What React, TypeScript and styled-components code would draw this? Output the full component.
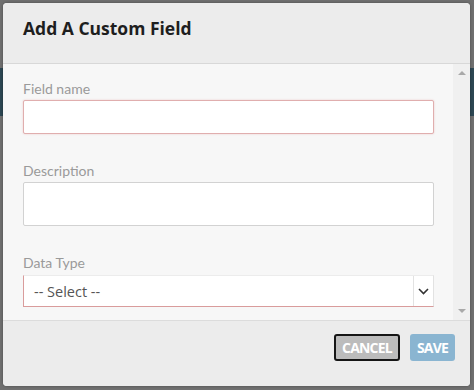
import React from "react";
import styled, { createGlobalStyle } from "styled-components";

const Global = createGlobalStyle`
  html, body { margin: 0; padding: 0; }
  body {
    width: 474px;
    height: 390px;
    overflow: hidden;
    background: linear-gradient(to bottom, #707070 0 68px, #2d4753 68px 116px, #707070 116px);
    font-family: "Open Sans", "Liberation Sans", sans-serif;
  }
`;

const Modal = styled.div`
  margin: 3px;
  width: 467px;
  height: 383px;
  box-sizing: border-box;
  border-radius: 4px;
  background: #ececec;
  display: flex;
  flex-direction: column;
  overflow: hidden;
  box-shadow: 0 0 3px rgba(0, 0, 0, 0.35);
`;

const Header = styled.div`
  height: 61px;
  box-sizing: border-box;
  padding: 13px 20px 0;
  border-bottom: 1px solid #d8d8d8;
  background: #ececec;
`;

const Title = styled.h1`
  margin: 0;
  font-family: "Open Sans", sans-serif;
  font-size: 17.5px;
  font-weight: 700;
  color: #1e1e1e;
`;

const Body = styled.div`
  height: 256px;
  display: flex;
  background: #f7f7f7;
  border-bottom: 1px solid #dcdcdc;
`;

const Content = styled.div`
  flex: 1;
  padding: 16px 19px 0 20px;
  overflow: hidden;
  display: flex;
  flex-direction: column;
`;

const Field = styled.div`
  display: flex;
  flex-direction: column;
  margin-bottom: 28px;
`;

const Label = styled.label`
  font-family: Lato, "Open Sans", sans-serif;
  font-size: 14px;
  line-height: 17px;
  color: #9a9a9a;
  margin-bottom: 3px;
`;

const TextInput = styled.div<{ $h: number; $error?: boolean }>`
  height: ${(p) => p.$h}px;
  box-sizing: border-box;
  background: #fff;
  border: 1px solid ${(p) => (p.$error ? "#e0aeae" : "#d2d2d2")};
  border-radius: 2px;
  box-shadow: ${(p) => (p.$error ? "0 0 2px rgba(220,140,140,0.45)" : "none")};
`;

const Select = styled.div`
  height: 32px;
  margin-top: 1px;
  box-sizing: border-box;
  background: #fff;
  border-style: solid;
  border-width: 1px;
  border-color: #ececec #e2e2e2 #d99c9c #d99c9c;
  display: flex;
  align-items: center;
`;

const SelectText = styled.span`
  flex: 1;
  padding-left: 10px;
  font-family: "Open Sans", sans-serif;
  font-size: 14.5px;
  color: #555;
`;

const Caret = styled.span`
  width: 19px;
  align-self: stretch;
  border-left: 1px solid #e2e2e2;
  display: flex;
  align-items: center;
  justify-content: center;
`;

const ScrollTrack = styled.div`
  width: 17px;
  background: #f0f0f0;
  display: flex;
  flex-direction: column;
  justify-content: space-between;
  align-items: center;
  padding: 7px 0 7px;
  box-sizing: border-box;
`;

const Arrow = styled.span<{ $down?: boolean }>`
  width: 0;
  height: 0;
  border-left: 4px solid transparent;
  border-right: 4px solid transparent;
  ${(p) =>
    p.$down ? "border-top: 4px solid #a9a9a9;" : "border-bottom: 4px solid #a9a9a9;"}
`;

const Footer = styled.div`
  flex: 1;
  display: flex;
  justify-content: flex-end;
  align-items: flex-start;
  gap: 10px;
  padding: 13px 15px 0;
  background: #ececec;
`;

const Button = styled.button<{ $primary?: boolean }>`
  height: 27px;
  box-sizing: border-box;
  padding: 0 ${(p) => (p.$primary ? "7px" : "6px")};
  font-family: "Open Sans", sans-serif;
  font-size: 14px;
  font-weight: 700;
  letter-spacing: -0.8px;
  color: #fff;
  text-transform: uppercase;
  border-radius: 3px;
  border: ${(p) => (p.$primary ? "none" : "2px solid #151515")};
  background: ${(p) => (p.$primary ? "#8ab5d1" : "#bcbcbc")};
  cursor: pointer;
`;

export default function App() {
  return (
    <>
      <Global />
      <Modal>
        <Header>
          <Title>Add A Custom Field</Title>
        </Header>
        <Body>
          <Content>
            <Field>
              <Label>Field name</Label>
              <TextInput $h={34} $error />
            </Field>
            <Field>
              <Label>Description</Label>
              <TextInput $h={44} />
            </Field>
            <Field>
              <Label>Data Type</Label>
              <Select>
                <SelectText>-- Select --</SelectText>
                <Caret>
                  <svg width="11" height="7" viewBox="0 0 11 7">
                    <path d="M1 1l4.5 4.5L10 1" fill="none" stroke="#333" strokeWidth="1.6" />
                  </svg>
                </Caret>
              </Select>
            </Field>
          </Content>
          <ScrollTrack>
            <Arrow />
            <Arrow $down />
          </ScrollTrack>
        </Body>
        <Footer>
          <Button>Cancel</Button>
          <Button $primary>Save</Button>
        </Footer>
      </Modal>
    </>
  );
}
